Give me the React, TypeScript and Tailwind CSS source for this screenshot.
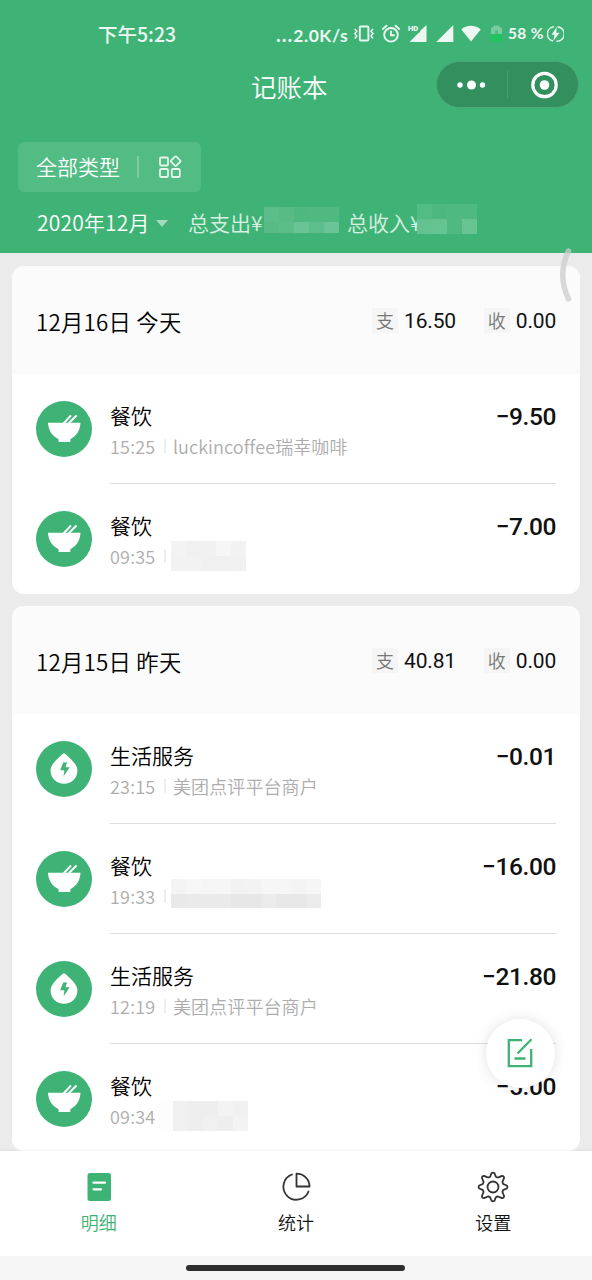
import React from 'react';

type Category = 'food' | 'life';

interface Cells {
  rows: string[][];
  heights: number[];
}

interface Entry {
  category: Category;
  time: string;
  amount: string;
  merchant?: string;
  hidden?: Cells;
  hiddenClass?: string;
}

interface Day {
  date: string;
  expense: string;
  income: string;
  entries: Entry[];
}

const LABELS: Record<Category, string> = { food: '餐饮', life: '生活服务' };

const DAYS: Day[] = [
  {
    date: '12月16日 今天',
    expense: '16.50',
    income: '0.00',
    entries: [
      { category: 'food', time: '15:25', amount: '−9.50', merchant: 'luckincoffee瑞幸咖啡' },
      {
        category: 'food',
        time: '09:35',
        amount: '−7.00',
        hiddenClass: 'ml-[5px]',
        hidden: {
          rows: [
            ['#f3f3f3', '#f0f0f0', '#f1f1f1', '#f6f6f6', '#f2f2f2'],
            ['#f2f2f2', '#f2f2f2', '#f0f0f0', '#f0f0f0', '#f1f1f1'],
          ],
          heights: [15, 15],
        },
      },
    ],
  },
  {
    date: '12月15日 昨天',
    expense: '40.81',
    income: '0.00',
    entries: [
      { category: 'life', time: '23:15', amount: '−0.01', merchant: '美团点评平台商户' },
      {
        category: 'food',
        time: '19:33',
        amount: '−16.00',
        hiddenClass: 'ml-[5px] -mt-[5px]',
        hidden: {
          rows: [
            ['#f4f4f4', '#f7f7f7', '#f5f5f5', '#f6f6f6', '#f2f2f2', '#f3f3f3', '#f6f6f6', '#f6f6f6', '#f4f4f4', '#f6f6f6'],
            ['#e9e9e9', '#eaeaea', '#eaeaea', '#eaeaea', '#e7e7e7', '#e7e7e7', '#ebebeb', '#e8e8e8', '#e8e8e8', '#ebebeb'],
          ],
          heights: [15, 14],
        },
      },
      { category: 'life', time: '12:19', amount: '−21.80', merchant: '美团点评平台商户' },
      {
        category: 'food',
        time: '09:34',
        amount: '−5.00',
        // the mosaic also covers the divider here
        hiddenClass: '-ml-[8px]',
        hidden: {
          rows: [
            ['#fdfdfd', '#f0f0f0', '#eeeeee', '#eeeeee', '#f3f3f3', '#f1f1f1'],
            ['#fdfdfd', '#f0f0f0', '#eeeeee', '#f0f0f0', '#eeeeee', '#f3f3f3'],
          ],
          heights: [15, 15],
        },
      },
    ],
  },
];

const Mosaic: React.FC<{ cells: Cells; className?: string }> = ({ cells, className }) => {
  const width = cells.rows[0].length * 15;
  const height = cells.heights.reduce((a, b) => a + b, 0);
  return (
    <svg width={width} height={height} className={`relative shrink-0 ${className ?? ''}`} shapeRendering="crispEdges">
      {cells.rows.map((row, r) =>
        row.map((fill, c) => (
          <rect key={`${r}-${c}`} x={c * 15} y={r * cells.heights[0]} width="15" height={cells.heights[r]} fill={fill} />
        )),
      )}
    </svg>
  );
};

const CategoryIcon: React.FC<{ category: Category }> = ({ category }) => (
  <svg width="56" height="56" viewBox="0 0 56 56" className="shrink-0">
    <circle cx="28" cy="28" r="28" fill="#3eb375" />
    {category === 'food' ? (
      <>
        <path d="M12 21.800h32.500c-.2 7-3.800 13.200-10.200 16.400v2.800H22.600v-2.800C16 35 12.200 28.800 12 21.800z" fill="#fff" />
        <path d="M28 22l6.500-7M33 22l7-7" stroke="#fff" strokeWidth="1.900" strokeLinecap="round" />
      </>
    ) : (
      <>
        <path d="M28 12.300c1 0 10 8.200 12 12.200 1 1.700 1.400 3.400 1.400 5.200a13.400 13 0 0 1-26.800 0c0-1.800.4-3.500 1.400-5.200 2-4 11-12.200 12-12.200z" fill="#fff" />
        <path d="M27.200 21.500h3.900l-1.700 4.700h4.300l-6.100 9 .8-6h-4.200z" fill="#3eb375" />
      </>
    )}
  </svg>
);

const StatusBar = () => (
  <div className="flex h-[61px] items-center pt-[7px] pl-[98px] text-white/90">
    <span className="w-[178px] text-[19.5px] font-medium">下午5:23</span>
    <span className="w-[78px] font-[Lato,sans-serif] text-[17.5px] font-bold tracking-[0.55px] whitespace-nowrap">
      <span className="text-[20px] tracking-[1px]">...</span>2.0K/s
    </span>
    <svg width="22" height="20" viewBox="0 0 22 20" className="shrink-0" fill="none" stroke="currentColor">
      <rect x="5.800" y="2.500" width="8.600" height="14" rx="1" strokeWidth="1.900" />
      <path d="M.8 5l2 2.300-2 2.300 2 2.400-2 2.500M19 5l-2 2.300 2 2.300-2 2.400 2 2.500" strokeWidth="1.500" />
    </svg>
    <svg width="20" height="20" viewBox="0 0 20 20" className="ml-[5px] shrink-0" fill="none" stroke="currentColor" strokeLinecap="round">
      <circle cx="10" cy="10.800" r="6.800" strokeWidth="1.900" />
      <path d="M10 7.500v3.700h3M1.800 5L5.500 1.800M18.200 5l-3.700-3.200" strokeWidth="1.900" />
    </svg>
    <svg width="20" height="20" viewBox="0 0 20 20" className="ml-[6px] shrink-0" fill="currentColor">
      <path d="M19.500 1v17H2.500L12 8.500h1V7z" />
      <text x="1" y="6.500" fontSize="7.500" fontWeight="900" fontFamily="Roboto, sans-serif">HD</text>
    </svg>
    <svg width="18" height="20" viewBox="0 0 18 20" className="ml-[9px] shrink-0" fill="currentColor">
      <path d="M17.300 1v17H.3z" />
    </svg>
    <svg width="20" height="20" viewBox="0 0 20 20" className="ml-[7px] shrink-0" fill="currentColor">
      <path d="M.3 5.500C5.500.6 14.500.6 19.700 5.500L10 17.500z" />
    </svg>
    <svg width="12" height="20" viewBox="0 0 12 20" className="ml-[10px] shrink-0">
      <path d="M0 10V4.500L3.500 1.500h4L11 4.500V10z" fill="#7acb9f" />
      <rect x="4" y="6" width="3" height="4" fill="#54bd87" />
      <rect y="10" width="11" height="7.500" fill="#20c35f" />
    </svg>
    <span className="ml-[5px] w-[39px] shrink-0 font-[Lato,sans-serif] text-[15.5px] font-bold tracking-[0.3px] whitespace-nowrap">58 %</span>
    <svg width="17" height="18" viewBox="0 0 17 18" className="shrink-0" fill="none" stroke="currentColor" strokeWidth="1.500">
      <path d="M7 1.800a7.200 7.200 0 0 0-1 14.200M10.500 1.800a7.200 7.200 0 0 1-1 14.500" />
      <path d="M9.800 2L4.500 9.800h3L6.300 16l6.200-8.300H9.300z" fill="currentColor" stroke="none" />
    </svg>
  </div>
);

const Header = () => (
  <header className="h-[253px] bg-[#3eb375] text-white">
    <StatusBar />
    <div className="flex h-[47px] items-center">
      <h1 className="ml-[251px] w-[185px] pt-[2px] text-[25.5px] leading-none font-[350]">记账本</h1>
      <div className="flex h-[47px] w-[143px] items-center rounded-full border border-[#4fa67b] bg-[#328f5e]">
        <svg width="70" height="28" viewBox="0 0 70 28" fill="#fff">
          <circle cx="23" cy="14" r="2.700" />
          <circle cx="34.500" cy="14" r="4.500" />
          <circle cx="45.500" cy="14" r="2.700" />
        </svg>
        <div className="h-[28px] w-px bg-[#4b9f72]" />
        <svg width="70" height="28" viewBox="0 0 70 28">
          <circle cx="36.500" cy="14" r="11.700" fill="none" stroke="#fff" strokeWidth="3.200" />
          <circle cx="36.500" cy="14" r="4.800" fill="#fff" />
        </svg>
      </div>
    </div>

    <div className="mt-[34px] ml-[18px] flex h-[50px] w-[183px] items-center rounded-md bg-[#53bb84] pl-[18px]">
      <span className="text-[21px] font-[350]">全部类型</span>
      <div className="ml-[17px] h-[22px] w-[2px] bg-white/25" />
      <svg width="24" height="24" viewBox="0 0 24 24" className="ml-[19px]" fill="none" stroke="#e4f5ec" strokeWidth="1.800">
        <rect x="2" y="2.500" width="8" height="8" rx="1.300" />
        <rect x="2" y="14" width="8" height="8" rx="1.300" />
        <rect x="13.800" y="14" width="8" height="8" rx="1.300" />
        <rect x="14" y="2.500" width="7.300" height="7.300" rx="1" transform="rotate(45 17.650 6.150)" />
      </svg>
    </div>

    <div className="mt-[8px] flex h-[46px] items-center pl-[37px] text-[21px] font-[350] whitespace-nowrap">
      <span className="w-[119px] tracking-[0.2px]">2020年12月</span>
      <svg width="12" height="7" viewBox="0 0 12 7">
        <path d="M0 0h12L6 7z" fill="#a3dabc" />
      </svg>
      <span className="ml-[20px] w-[76px] text-white/80">总支出¥</span>
      <Mosaic
        className="-mt-[6px]"
        cells={{
          rows: [
            ['#5bbd89', '#58bb86', '#4fb87f', '#50b981', '#50b981'],
            ['#58bb86', '#5cbd89', '#6ac394', '#5cbe8a', '#6bc495'],
          ],
          heights: [15, 11],
        }}
      />
      <span className="ml-[8px] w-[70px] text-white/80">总收入¥</span>
      <Mosaic
        className="-mt-[8px]"
        cells={{
          rows: [
            ['#53bb84', '#4cb87f', '#4eb980', '#4eb980'],
            ['#63c28f', '#66c392', '#4eb980', '#68c493'],
          ],
          heights: [15, 15],
        }}
      />
    </div>
  </header>
);

const Summary: React.FC<{ label: string; value: string }> = ({ label, value }) => (
  <div className="flex items-center">
    <span className="flex h-[25px] w-[26px] items-center justify-center bg-[#f5f5f5] text-[18px] leading-none font-[350] text-[#777]">{label}</span>
    <span className="ml-[6px] pt-[2px] font-[Roboto,sans-serif] text-[21px] leading-[30px] tracking-[-0.2px] text-[#111]">{value}</span>
  </div>
);

const EntryRow: React.FC<{ entry: Entry; last: boolean }> = ({ entry, last }) => (
  <div className="flex h-[110px] pr-[24px] pl-[24px]">
    <div className="pt-[27px]">
      <CategoryIcon category={entry.category} />
    </div>
    <div className={`ml-[18px] flex flex-1 justify-between border-b pt-[25px] ${last ? 'border-transparent' : 'border-[#dedede]'}`}>
      <div>
        <p className="h-[32px] text-[21px] leading-[32px] font-[350] text-black">{LABELS[entry.category]}</p>
        <div className="flex h-[30px] items-center text-[18px] leading-[30px] font-[350] whitespace-nowrap text-[#adadad]">
          <span className="w-[54px] shrink-0 tracking-[0.2px]">{entry.time}</span>
          <div className="h-[14px] w-[2px] shrink-0 bg-[#eeeeee]" />
          {entry.merchant && <span className="ml-[7px] tracking-[0.1px]">{entry.merchant}</span>}
          {entry.hidden && <Mosaic cells={entry.hidden} className={entry.hiddenClass} />}
        </div>
      </div>
      <span className="mt-[1px] h-[34px] font-[Roboto,sans-serif] text-[24.5px] leading-[34px] font-medium tracking-[-0.4px] text-[#111]">{entry.amount}</span>
    </div>
  </div>
);

const DayCard: React.FC<{ day: Day }> = ({ day }) => (
  <section className="shrink-0 overflow-hidden rounded-xl bg-white last:shrink">
    <div className="flex h-[108px] items-center justify-between bg-[#fbfbfb] pr-[24px] pl-[24px]">
      <h2 className="pt-[4px] text-[22.4px] font-[350] tracking-[0.2px] text-black">{day.date}</h2>
      <div className="flex gap-[28px]">
        <Summary label="支" value={day.expense} />
        <Summary label="收" value={day.income} />
      </div>
    </div>
    {day.entries.map((entry, i) => (
      <EntryRow key={entry.time} entry={entry} last={i === day.entries.length - 1} />
    ))}
  </section>
);

const TabBar = () => (
  <nav className="flex h-[105px] bg-white pt-[20px] text-[18px] font-[350] text-[#111] shadow-[0_-1px_3px_rgba(0,0,0,0.05)]">
    <div className="flex flex-1 flex-col items-center text-[#3eb375]">
      <svg width="32" height="32" viewBox="0 0 32 32">
        <rect x="4.500" y="2" width="23.500" height="28" rx="2.500" fill="#3eb375" />
        <path d="M10.500 11.700h11.500M10.500 18.300h7.500" stroke="#fff" strokeWidth="2.200" strokeLinecap="round" />
      </svg>
      <span className="mt-[6px] leading-[26px]">明细</span>
    </div>
    <div className="flex flex-1 flex-col items-center">
      <svg width="32" height="32" viewBox="0 0 32 32" fill="none" stroke="#333" strokeWidth="1.800" strokeLinecap="round" strokeLinejoin="round">
        <path d="M16.500 2.700v12.800h13A13 12.800 0 0 0 16.500 2.700z" />
        <path d="M12 3.500a13 13 0 1 0 16.500 17" />
      </svg>
      <span className="mt-[6px] leading-[26px]">统计</span>
    </div>
    <div className="flex flex-1 flex-col items-center">
      <svg width="32" height="32" viewBox="0 0 32 32" fill="none" stroke="#333" strokeWidth="1.800" strokeLinejoin="round">
        <circle cx="16" cy="16" r="5.500" />
        <path d="M14.500 2.200Q16 1 17.500 2.200L18.800 5.600Q20.300 7 22 6.200L25 4.900Q27 5 27.100 7L25.800 10Q25 11.700 26.400 13.200L29.800 14.500Q31 16 29.800 17.500L26.400 18.800Q25 20.300 25.800 22L27.100 25Q27 27 25 27.100L22 25.800Q20.300 25 18.800 26.400L17.500 29.800Q16 31 14.500 29.800L13.200 26.400Q11.700 25 10 25.800L7 27.100Q5 27 4.900 25L6.200 22Q7 20.300 5.600 18.800L2.200 17.500Q1 16 2.200 14.500L5.600 13.200Q7 11.700 6.200 10L4.900 7Q5 5 7 4.900L10 6.200Q11.700 7 13.200 5.600z" />
      </svg>
      <span className="mt-[6px] leading-[26px]">设置</span>
    </div>
  </nav>
);

export default function App() {
  return (
    <div className="relative flex h-[1280px] w-[592px] flex-col overflow-hidden bg-[#ebebeb] font-['Noto_Sans_CJK_SC',sans-serif]">
      <Header />
      <main className="flex h-[898px] flex-col gap-[12px] overflow-hidden px-[12px] pt-[13px]">
        {DAYS.map((day) => (
          <DayCard key={day.date} day={day} />
        ))}
      </main>
      <TabBar />
      <div className="flex h-[24px] justify-center bg-[#f5f5f5] pt-[9px] pr-[2px]">
        <div className="h-[6px] w-[219px] rounded-full bg-[#2e2e2e]" />
      </div>

      {/* edge handle */}
      <svg width="14" height="56" viewBox="0 0 14 56" className="absolute top-[247px] left-[559px]" fill="none">
        <path d="M9.500 4Q-2 28 9.500 52" stroke="#cccccc" strokeOpacity=".75" strokeWidth="5.500" strokeLinecap="round" />
      </svg>

      {/* add entry */}
      <button className="absolute top-[1019px] left-[486px] flex h-[69px] w-[69px] items-center justify-center rounded-full bg-white pr-[2px] pb-[2px] shadow-[0_0_14px_rgba(0,0,0,0.12)]">
        <svg width="28" height="32" viewBox="0 0 28 32" fill="none" stroke="#3eb375" strokeWidth="2.300">
          <path d="M16 3.200H2.800v26h22.400V12" />
          <path d="M11.500 16.500L25.500 2.300M8.500 21.500h11" />
        </svg>
      </button>
    </div>
  );
}
